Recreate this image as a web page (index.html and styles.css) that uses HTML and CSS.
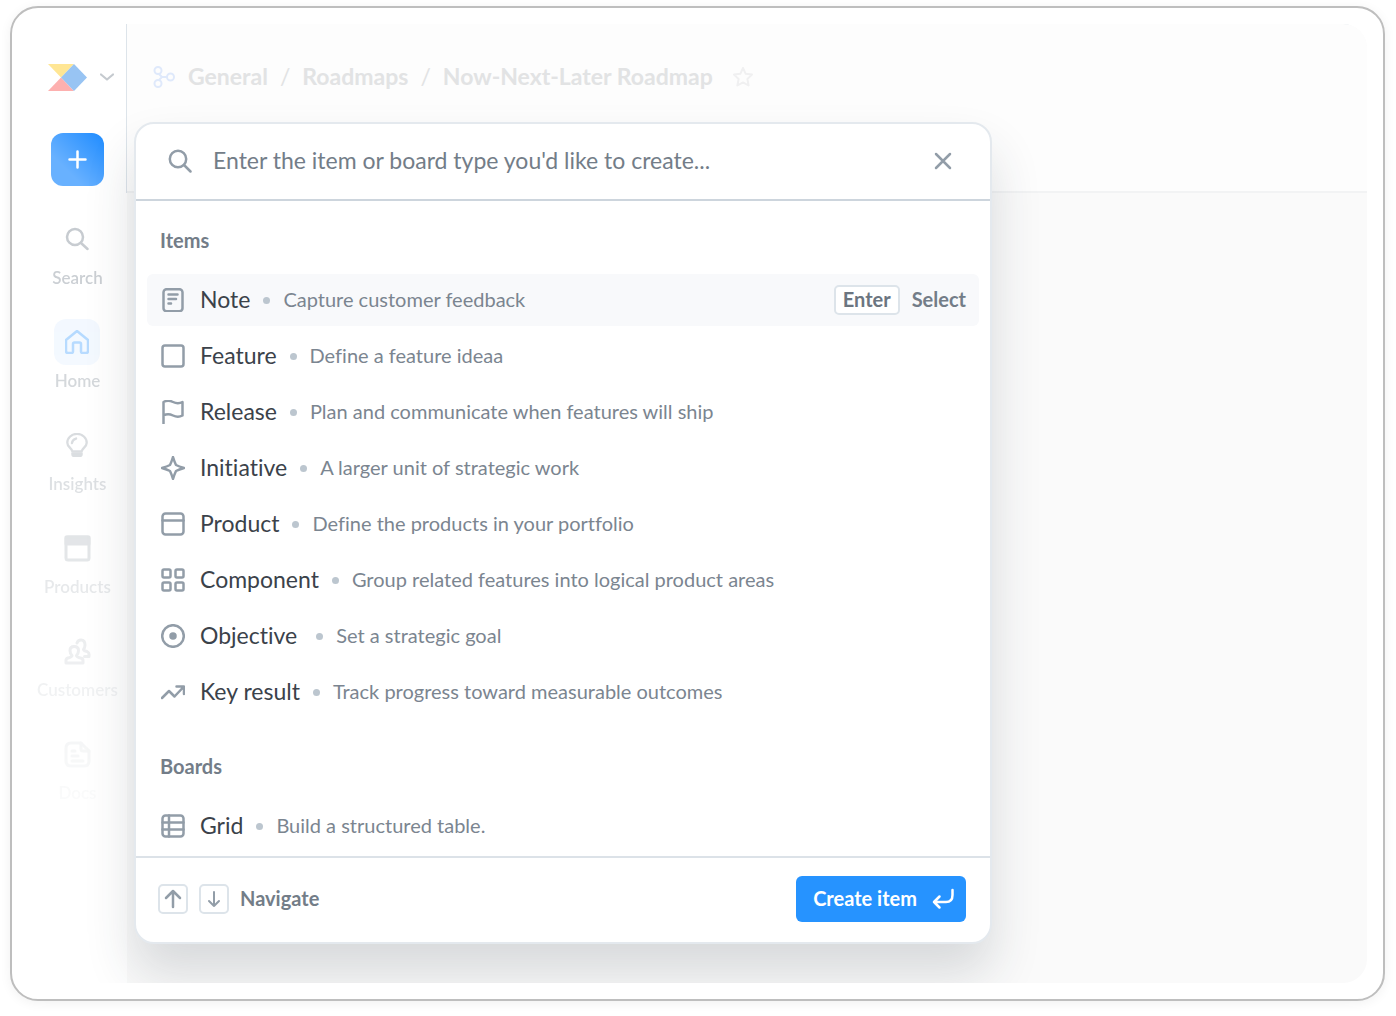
FILE: index.html
```html
<!DOCTYPE html>
<html lang="en">
<head>
<meta charset="utf-8">
<meta name="viewport" content="width=device-width, initial-scale=1">
<title>Now-Next-Later Roadmap</title>
<link rel="stylesheet" href="styles.css">
</head>
<body>
<div class="frame">
<div class="app">
  <aside class="sidebar">
    <button class="workspace" type="button" aria-label="Switch workspace">
      <svg width="39" height="27" viewBox="0 0 39 27"><path d="M0 0H26L13 13.500Z" fill="#ffe694"/><path d="M0 27H26L13 13.500Z" fill="#fdb0af"/><path d="M26 0L39 13.500L26 27L13 13.500Z" fill="#98c4f3"/></svg>
      <svg width="14" height="8" viewBox="0 0 14 8" fill="none" stroke="#c5cacf" stroke-width="2.200" stroke-linecap="round" stroke-linejoin="round"><path d="M1 1.500L7 6.500L13 1.500"/></svg>
    </button>
    <button class="add" type="button" aria-label="Create">
      <svg width="19" height="19" viewBox="0 0 19 19" stroke="#fff" stroke-width="2.500" stroke-linecap="round"><path d="M9.500 1.500V17.500M1.500 9.500H17.500"/></svg>
    </button>
    <nav class="nav" aria-label="Main">
      <a class="nav-item" href="#search"><span class="tile"><svg class="icon" viewBox="0 0 24 24"><circle cx="10" cy="10" r="8"/><path d="M16 16L22.500 22"/></svg></span>Search</a>
      <a class="nav-item active" href="#home"><span class="tile"><svg class="icon" viewBox="0 0 24 24"><path d="M12 1L23 10V21Q23 23 21 23H17.500Q16 23 16 21.500V14Q16 12.500 14.500 12.500H9.500Q8 12.500 8 14V21.500Q8 23 6.500 23H3Q1 23 1 21V10Z"/></svg></span>Home</a>
      <a class="nav-item" href="#insights"><span class="tile"><svg class="icon" viewBox="0 0 24 26"><path d="M7 20C6 16 1.500 15 1.500 10.500A10.500 9.500 0 0 1 22.500 10.500C22.500 15 18 16 17 20Z"/><path d="M7 22V23Q7 25 9 25H15Q17 25 17 23V22Z" fill="currentColor"/><path d="M6.500 11Q7 7 11 6"/></svg></span>Insights</a>
      <a class="nav-item" href="#products"><span class="tile"><svg class="icon wide" viewBox="0 0 27 27"><rect x="2" y="2" width="23" height="23" rx="2"/><path d="M2 2H25V9H2Z" fill="currentColor"/></svg></span>Products</a>
      <a class="nav-item" href="#customers"><span class="tile"><svg class="icon wide" viewBox="0 0 27 27"><path d="M2 25V22.500Q2 20.500 4 20Q8 19 8 17.500Q6 15.500 6 12.500Q6 8.500 10.200 8.500Q14.500 8.500 14.500 12.500Q14.500 15.500 12.500 17.500Q12.500 19 16.500 20Q19 20.500 19 22.500V25Z"/><path d="M13 5Q14 2 17 2Q21 2 21 7Q21 9.500 19.500 11.500Q20 13 23 13.500Q25 14.500 25 16V18.500H20.500"/></svg></span>Customers</a>
      <a class="nav-item" href="#docs"><span class="tile"><svg class="icon wide" viewBox="0 0 27 27"><path d="M17 2H7Q2 2 2 7V20Q2 25 7 25H20Q25 25 25 20V10Z"/><path d="M17 2V8Q17 10 19 10H25M8 10H11M8 15H14M8 20H19"/></svg></span>Docs</a>
    </nav>
  </aside>

  <main class="board">
    <header class="board-header">
      <nav class="crumbs" aria-label="Breadcrumb">
        <svg class="crumb-icon" width="22" height="22" viewBox="0 0 22 22" fill="none" stroke="#dfe9fb" stroke-width="2"><circle cx="5" cy="4.500" r="3.500"/><circle cx="5" cy="17.500" r="3.500"/><circle cx="17.500" cy="11" r="3.500"/><path d="M6 8L9 11L6 14M9 11H14"/></svg>
        <a href="#general">General</a><span class="slash">/</span><a href="#roadmaps">Roadmaps</a><span class="slash">/</span><a href="#roadmap" aria-current="page">Now-Next-Later Roadmap</a>
        <button class="star" type="button" aria-label="Add to favourites"><svg width="20" height="20" viewBox="0 0 20 20" fill="none" stroke="#f0f0f1" stroke-width="2" stroke-linejoin="round"><path d="M10 1L12.700 6.800L19 7.600L14.400 12L15.600 18.500L10 15.400L4.400 18.500L5.600 12L1 7.600L7.300 6.800Z"/></svg></button>
      </nav>
    </header>
  </main>

  <section class="palette" role="dialog" aria-label="Create an item or board">
    <div class="search">
      <svg class="icon" viewBox="0 0 24 24"><circle cx="10" cy="10" r="8.200"/><path d="M16 16L22.500 22.500"/></svg>
      <input type="text" aria-label="Item or board type" placeholder="Enter the item or board type you'd like to create...">
      <button class="close" type="button" aria-label="Close"><svg width="18" height="18" viewBox="0 0 18 18" fill="none" stroke="currentColor" stroke-width="2.500" stroke-linecap="round"><path d="M2 2L16 16M16 2L2 16"/></svg></button>
    </div>

    <div class="results">
      <h2>Items</h2>
      <ul>
        <li><button class="row selected" type="button"><svg class="icon" viewBox="0 0 24 24"><rect x="2.500" y="1.200" width="19" height="22" rx="3"/><path d="M7.500 6.500H16.500M7.500 11H15M7.500 15.500H10"/></svg><span class="name">Note</span><span class="dot"></span><span class="desc">Capture customer feedback</span><kbd>Enter</kbd><span class="hint">Select</span></button></li>
        <li><button class="row" type="button"><svg class="icon" viewBox="0 0 24 24"><rect x="1.500" y="1.500" width="21" height="21" rx="2.500"/></svg><span class="name">Feature</span><span class="dot"></span><span class="desc">Define a feature ideaa</span></button></li>
        <li><button class="row" type="button"><svg class="icon" viewBox="0 0 24 24"><path d="M2.500 23.500V2Q7 -0.500 12 2Q17 4.500 21.500 2V15.500Q17 18 12 15.500Q7 13 2.500 15.500"/></svg><span class="name">Release</span><span class="dot"></span><span class="desc">Plan and communicate when features will ship</span></button></li>
        <li><button class="row" type="button"><svg class="icon" viewBox="0 0 24 24"><path d="M12 1Q13.500 6 15 9Q18 10.500 23 12Q18 13.500 15 15Q13.500 18 12 23Q10.500 18 9 15Q6 13.500 1 12Q6 10.500 9 9Q10.500 6 12 1Z"/></svg><span class="name">Initiative</span><span class="dot"></span><span class="desc">A larger unit of strategic work</span></button></li>
        <li><button class="row" type="button"><svg class="icon" viewBox="0 0 24 24"><rect x="1.500" y="1.500" width="21" height="21" rx="3"/><path d="M1.500 8.500H22.500"/></svg><span class="name">Product</span><span class="dot"></span><span class="desc">Define the products in your portfolio</span></button></li>
        <li><button class="row" type="button"><svg class="icon" viewBox="0 0 24 24"><rect x="1.500" y="1.500" width="8" height="8" rx="1.500"/><rect x="14.500" y="1.500" width="8" height="8" rx="1.500"/><rect x="1.500" y="14.500" width="8" height="8" rx="1.500"/><rect x="14.500" y="14.500" width="8" height="8" rx="1.500"/></svg><span class="name">Component</span><span class="dot"></span><span class="desc">Group related features into logical product areas</span></button></li>
        <li><button class="row" type="button"><svg class="icon" viewBox="0 0 24 24"><circle cx="12" cy="12" r="10.800"/><circle cx="12" cy="12" r="2.500" fill="currentColor"/></svg><span class="name spaced">Objective</span><span class="dot"></span><span class="desc">Set a strategic goal</span></button></li>
        <li><button class="row" type="button"><svg class="icon" viewBox="0 0 24 24"><path d="M1 18L8 11L13.500 16.500L22.500 7M15.500 6.500H23V14"/></svg><span class="name">Key result</span><span class="dot"></span><span class="desc">Track progress toward measurable outcomes</span></button></li>
      </ul>
      <h2>Boards</h2>
      <ul>
        <li><button class="row" type="button"><svg class="icon" viewBox="0 0 24 24"><rect x="1.500" y="1.500" width="21" height="21" rx="3"/><path d="M1.500 8.500H22.500M1.500 15.500H22.500M8 1.500V22.500"/></svg><span class="name">Grid</span><span class="dot"></span><span class="desc">Build a structured table.</span></button></li>
      </ul>
    </div>

    <footer class="palette-footer">
      <kbd class="key"><svg width="18" height="20" viewBox="0 0 18 20" fill="none" stroke="currentColor" stroke-width="2.500" stroke-linecap="round" stroke-linejoin="round"><path d="M9 18V2M2 9L9 2L16 9"/></svg></kbd>
      <kbd class="key"><svg width="18" height="20" viewBox="0 0 18 20" fill="none" stroke="currentColor" stroke-width="2" stroke-linecap="round" stroke-linejoin="round"><path d="M9 3V17M4 12L9 17L14 12"/></svg></kbd>
      <span class="hint">Navigate</span>
      <button class="create" type="button"><span>Create item</span><svg width="22" height="22" viewBox="0 0 22 22" fill="none" stroke="currentColor" stroke-width="2.500" stroke-linecap="round" stroke-linejoin="round"><path d="M20.500 2V7Q20.500 14 14 14H2M7.500 8.500L2 14L7.500 19.500"/></svg></button>
    </footer>
  </section>
</div>
</div>
</body>
</html>
```
FILE: styles.css
```css
* { box-sizing: border-box; }

body {
  display: flex;
  min-height: 100vh;
  margin: 0;
  padding: 6px 11px 15px 10px;
  background: #fff;
  color: #3b424a;
  font-family: Lato, "Liberation Sans", sans-serif;
  font-variant-ligatures: none;
}

button, input, kbd { font: inherit; color: inherit; }
button { padding: 0; border: 0; background: none; cursor: pointer; font-variant-ligatures: none; }
a { color: inherit; text-decoration: none; }
ul { margin: 0; padding: 0; list-style: none; }
svg { display: block; flex: none; }

.icon {
  width: 24px;
  height: 24px;
  fill: none;
  stroke: currentColor;
  stroke-width: 2.5;
  stroke-linecap: round;
  stroke-linejoin: round;
}

.frame {
  display: flex;
  flex: 1;
  padding: 16px;
  border: 2px solid #bebebe;
  border-radius: 28px;
  background: #fff;
  box-shadow: 0 2px 12px rgba(0, 0, 0, 0.06);
}

.app {
  position: relative;
  display: flex;
  flex: 1;
  overflow: hidden;
  border-radius: 24px;
}

/* Sidebar */
.sidebar {
  display: flex;
  flex-direction: column;
  align-items: center;
  width: 99px;
  padding-top: 37px;
}

.workspace {
  display: flex;
  align-items: center;
  gap: 13px;
  height: 32px;
  margin-left: 6px;
}

.add {
  display: grid;
  place-items: center;
  width: 53px;
  height: 53px;
  margin-top: 40px;
  border-radius: 12px;
  background: linear-gradient(to top right, #68b1ff 30%, #1f8cff);
}

.nav {
  display: flex;
  flex-direction: column;
  gap: 31px;
  margin-top: 30px;
  color: #75808c;
  font-size: 17px;
  line-height: 20px;
  font-weight: 600;
  mask-image: linear-gradient(rgba(0, 0, 0, 0.42), rgba(0, 0, 0, 0.03));
}

.nav-item {
  display: flex;
  flex-direction: column;
  align-items: center;
  gap: 6px;
}

.nav .icon.wide { width: 27px; height: 27px; stroke-width: 3; }

.tile {
  display: grid;
  place-items: center;
  width: 46px;
  height: 46px;
  border-radius: 12px;
}

.active .tile { background: #dcecff; color: #2693ff; }

/* Board behind the palette */
.board {
  flex: 1;
  background: #fafafa;
}

.board-header {
  height: 169px;
  padding: 38px 26px 0;
  border-bottom: 2px solid #f2f3f4;
  background: #fdfdfd;
  box-shadow: -1px 0 #dde4ea;
}

.crumbs {
  display: flex;
  align-items: center;
  height: 30px;
  color: #e2e3e4;
  font-size: 23px;
  line-height: 28px;
  font-weight: 700;
}

.crumbs a, .slash { padding-bottom: 2px; }
.crumb-icon { margin-right: 13px; }
.slash { margin: 0 12px; font-weight: 400; }
.star { margin-left: 20px; }

/* Create palette */
.palette {
  position: absolute;
  top: 98px;
  left: 106px;
  width: calc(100% - 481px);
  border: 2px solid #e4e9ee;
  border-radius: 20px;
  background: #fff;
  box-shadow: 0 30px 50px rgba(40, 48, 60, 0.16);
}

.search {
  display: flex;
  align-items: center;
  gap: 21px;
  height: 77px;
  padding: 0 38px 2px 32px;
  border-bottom: 2px solid #cdd5dd;
  color: #929da8;
}

.search input {
  flex: 1;
  min-width: 0;
  padding: 0 0 2px;
  border: 0;
  outline: 0;
  background: none;
  font-size: 23px;
}

.search input::placeholder { color: #737d88; opacity: 1; }

.results { padding: 0 11px 4px; }

h2 {
  margin: 0 0 21px;
  padding: 26px 0 0 13px;
  color: #737d88;
  font-size: 20px;
  line-height: 26px;
  font-weight: 700;
}

ul + h2 { padding-top: 35px; }
li + li { margin-top: 4px; }

.row {
  display: flex;
  align-items: center;
  width: 100%;
  height: 52px;
  padding: 0 13px 0 14px;
  border-radius: 6px;
  text-align: left;
}

.selected { background: #f8f9fb; }
.row .icon { color: #929da8; }
.name, .desc, .hint, .create span { padding-bottom: 2px; }
.name { margin-left: 15px; font-size: 23px; }
.spaced { margin-right: 6px; }

.dot {
  width: 7px;
  height: 7px;
  margin: 1px 13px 0;
  border-radius: 50%;
  background: #bcc6cf;
}

.desc { flex: 1; color: #7b8590; font-size: 20px; }
.hint { color: #737d88; font-size: 20px; font-weight: 700; }

kbd {
  padding: 0 7px 2px;
  border: 2px solid #dde4ea;
  border-radius: 5px;
  background: #fff;
  color: #6b7580;
  font-size: 20px;
  line-height: 24px;
  font-weight: 700;
}

.row kbd { margin-right: 12px; }

.palette-footer {
  display: flex;
  align-items: center;
  gap: 11px;
  padding: 18px 24px 20px 22px;
  border-top: 2px solid #dce2e8;
}

.key {
  display: grid;
  place-items: center;
  width: 30px;
  height: 30px;
  padding: 0;
  color: #929da8;
}

.create {
  display: flex;
  align-items: center;
  gap: 15px;
  height: 46px;
  margin-left: auto;
  padding: 0 12px 0 17px;
  border-radius: 6px;
  background: #2693ff;
  color: #fff;
  font-size: 20px;
  font-weight: 700;
}
```
